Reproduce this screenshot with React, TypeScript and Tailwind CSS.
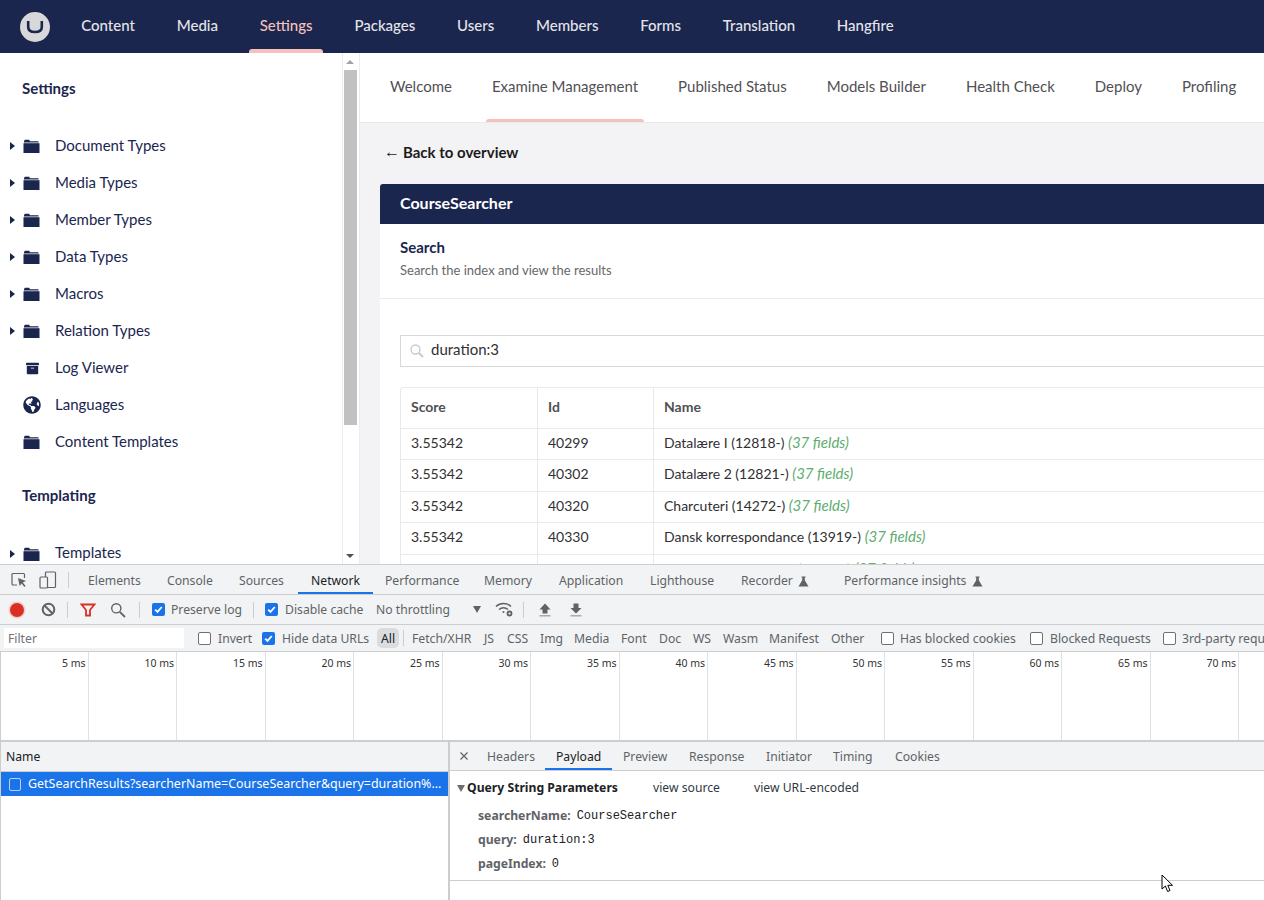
import React from 'react'
import { FaGlobeAmericas, FaArchive } from 'react-icons/fa'

const navItems = ['Content', 'Media', 'Settings', 'Packages', 'Users', 'Members', 'Forms', 'Translation', 'Hangfire']
const sectionTabs = ['Welcome', 'Examine Management', 'Published Status', 'Models Builder', 'Health Check', 'Deploy', 'Profiling']
const treeTop = [
  { label: 'Document Types', icon: 'folder', arrow: true },
  { label: 'Media Types', icon: 'folder', arrow: true },
  { label: 'Member Types', icon: 'folder', arrow: true },
  { label: 'Data Types', icon: 'folder', arrow: true },
  { label: 'Macros', icon: 'folder', arrow: true },
  { label: 'Relation Types', icon: 'folder', arrow: true },
  { label: 'Log Viewer', icon: 'box', arrow: false },
  { label: 'Languages', icon: 'globe', arrow: false },
  { label: 'Content Templates', icon: 'folder', arrow: false },
]
const rows = [
  { id: '40299', name: 'Datalære I (12818-)', h: 'h-[31px]', pb: 'pb-[3px]' },
  { id: '40302', name: 'Datalære 2 (12821-)', h: 'h-[32px]', pb: 'pb-[4px]' },
  { id: '40320', name: 'Charcuteri (14272-)', h: 'h-[31px]', pb: 'pb-[3px]' },
  { id: '40330', name: 'Dansk korrespondance (13919-)', h: 'h-[32px]', pb: 'pb-[4px]' },
  { id: '40331', name: 'Almen erhvervsrettet (13920-)', h: 'h-[31px]', pb: 'pb-[3px]' },
]
const devTabs = [
  { label: 'Elements', w: 'w-[79px]' },
  { label: 'Console', w: 'w-[72px]' },
  { label: 'Sources', w: 'w-[72px]' },
  { label: 'Network', w: 'w-[74px]', active: true },
  { label: 'Performance', w: 'w-[99px]' },
  { label: 'Memory', w: 'w-[75px]' },
  { label: 'Application', w: 'w-[91px]' },
  { label: 'Lighthouse', w: 'w-[91px]' },
]
const filters = [
  { label: 'Fetch/XHR', w: 'w-[72px]' },
  { label: 'JS', w: 'w-[23px]' },
  { label: 'CSS', w: 'w-[33px]' },
  { label: 'Img', w: 'w-[34px]' },
  { label: 'Media', w: 'w-[47px]' },
  { label: 'Font', w: 'w-[38px]' },
  { label: 'Doc', w: 'w-[34px]' },
  { label: 'WS', w: 'w-[30px]' },
  { label: 'Wasm', w: 'w-[46px]' },
  { label: 'Manifest', w: 'w-[62px]' },
  { label: 'Other', w: 'w-[50px]' },
]
const ticks = [5, 10, 15, 20, 25, 30, 35, 40, 45, 50, 55, 60, 65, 70]
const detailTabs = [
  { label: 'Headers', w: 'w-[69px]' },
  { label: 'Payload', w: 'w-[67px]', active: true },
  { label: 'Preview', w: 'w-[66px]' },
  { label: 'Response', w: 'w-[77px]' },
  { label: 'Initiator', w: 'w-[67px]' },
  { label: 'Timing', w: 'w-[62px]' },
  { label: 'Cookies', w: 'w-[70px]' },
]
const params = [
  { key: 'searcherName:', value: 'CourseSearcher' },
  { key: 'query:', value: 'duration:3' },
  { key: 'pageIndex:', value: '0' },
]

function FolderIcon() {
  return (
    <svg width="17" height="14" viewBox="0 0 17 14" fill="#1b264f">
      <path d="M1 2.2 L1.8 0.8 H6.2 L7 2.2 H15.5 V3.4 H1 Z" />
      <rect x="0.5" y="4.2" width="16" height="9.8" />
    </svg>
  )
}

function TreeIcon({ icon }: { icon: string }) {
  if (icon === 'globe') return <FaGlobeAmericas className="text-[18px] text-[#1b264f]" />
  if (icon === 'box') return <FaArchive className="ml-[3px] text-[13px] text-[#1b264f]" />
  return <FolderIcon />
}

function TreeRow({ label, icon, arrow }: { label: string; icon: string; arrow: boolean }) {
  return (
    <div className="flex h-[37px] items-center text-[15px] text-[#1b264f]">
      <div className="flex w-[23px] shrink-0 pl-[10px]">
        {arrow && <div className="h-0 w-0 border-y-[4px] border-l-[5px] border-y-transparent border-l-[#1b264f]" />}
      </div>
      <div className="flex w-[32px] shrink-0 items-center">
        <TreeIcon icon={icon} />
      </div>
      <span className="pb-[2px]">{label}</span>
    </div>
  )
}

function Check({ checked }: { checked?: boolean }) {
  return checked ? (
    <div className="flex h-[13px] w-[13px] shrink-0 items-center justify-center rounded-[2px] bg-[#1a73e8]">
      <svg width="11" height="11" viewBox="0 0 11 11" fill="none" stroke="#fff" strokeWidth="1.8">
        <path d="M2.2 5.6 L4.5 7.9 L8.8 3" />
      </svg>
    </div>
  ) : (
    <div className="h-[13px] w-[13px] shrink-0 rounded-[2px] border border-[#6f7175] bg-white" />
  )
}

function Flask() {
  return (
    <svg className="shrink-0" width="11" height="11" viewBox="0 0 11 11" fill="#5f6368">
      <path d="M3.5 0.5 H7.5 V1.5 H6.8 V4.2 L10.5 10.5 H0.5 L4.2 4.2 V1.5 H3.5 Z" />
    </svg>
  )
}

function Sep() {
  return <div className="h-[16px] w-px shrink-0 bg-[#c9ccd1]" />
}

function Sidebar() {
  return (
    <div className="flex w-[360px] shrink-0 overflow-hidden bg-white">
      <div className="w-[342px] shrink-0">
        <div className="pt-[24px] pl-[22px] text-[15px] font-bold text-[#1b264f]">Settings</div>
        <div className="pt-[28px]">
          {treeTop.map((item) => (
            <TreeRow key={item.label} {...item} />
          ))}
        </div>
        <div className="pt-[23px] pl-[22px] text-[15px] font-bold text-[#1b264f]">Templating</div>
        <div className="pt-[29px]">
          <TreeRow label="Templates" icon="folder" arrow />
        </div>
      </div>
      <div className="flex w-[18px] shrink-0 flex-col border-x border-[#ececec] bg-white">
        <div className="flex h-[17px] items-center justify-center pr-[2px]">
          <div className="h-0 w-0 border-x-[4px] border-b-[4px] border-x-transparent border-b-[#a3a3a3]" />
        </div>
        <div className="mr-[2px] ml-[1px] h-[355px] bg-[#c1c1c1]" />
        <div className="flex-1" />
        <div className="flex h-[17px] items-center justify-center pr-[2px]">
          <div className="h-0 w-0 border-x-[4px] border-t-[4px] border-x-transparent border-t-[#505050]" />
        </div>
      </div>
    </div>
  )
}

function Content() {
  return (
    <div className="min-w-0 flex-1 overflow-hidden bg-[#f3f3f5]">
      <div className="flex h-[70px] border-b border-[#e9e9eb] bg-white px-[10px] pt-0 text-[15px] text-[#515054]">
        {sectionTabs.map((tab) => (
          <div
            key={tab}
            className="relative flex h-full items-center whitespace-nowrap px-[20px] pb-[2px]"
          >
            {tab}
            {tab === 'Examine Management' && (
              <div className="absolute bottom-0 left-[14px] right-[14px] h-[3px] rounded-t-[3px] bg-[#f5c1bc]" />
            )}
          </div>
        ))}
      </div>
      <div className="pl-[20px]">
        <div className="flex h-[61px] items-center pb-[3px] pl-[4px] text-[15px] text-[#1b1b1b]">
          <span className="mr-[3px] font-['Liberation_Sans',sans-serif] text-[16px] font-normal">←</span>
          <span className="font-bold">Back to overview</span>
        </div>
        <div className="w-[1000px] rounded-t-[3px] bg-white">
          <div className="flex h-[40px] items-center rounded-t-[3px] bg-[#1b264f] pb-[2px] pl-[20px] text-[16px] font-bold text-white">
            CourseSearcher
          </div>
          <div className="h-[75px] border-b border-[#e9e9eb] pt-[13px] pl-[20px]">
            <div className="text-[15px] leading-[20px] font-bold text-[#1b264f]">Search</div>
            <div className="pt-[3px] text-[13px] leading-[20px] text-[#68676b]">Search the index and view the results</div>
          </div>
          <div className="px-[20px] pt-[36px]">
            <div className="flex h-[32px] items-center border border-[#d8d7d9] pl-[9px] text-[15px] text-[#303033]">
              <svg width="14" height="14" viewBox="0 0 14 14" fill="none" stroke="#c9c9cc" strokeWidth="1.3">
                <circle cx="5.5" cy="5.5" r="4.5" />
                <path d="M9 9 L13 13" strokeWidth="2" />
              </svg>
              <span className="pb-[3px] pl-[7px]">duration:3</span>
            </div>
            <div className="mt-[20px] rounded-[3px] border border-[#e9e9eb] text-[14px] text-[#303033]">
              <div className="flex h-[41px] items-center border-b border-[#e9e9eb] font-bold text-[#515054]">
                <div className="flex h-full w-[137px] items-center border-r border-[#e9e9eb] pb-[3px] pl-[10px]">Score</div>
                <div className="flex h-full w-[116px] items-center border-r border-[#e9e9eb] pb-[3px] pl-[10px]">Id</div>
                <div className="pb-[3px] pl-[10px]">Name</div>
              </div>
              {rows.map((row) => (
                <div key={row.id} className={`flex items-center border-b border-[#e9e9eb] ${row.h}`}>
                  <div className={`flex h-full w-[137px] items-center border-r border-[#e9e9eb] pl-[10px] ${row.pb}`}>3.55342</div>
                  <div className={`flex h-full w-[116px] items-center border-r border-[#e9e9eb] pl-[10px] ${row.pb}`}>{row.id}</div>
                  <div className={`pl-[10px] ${row.pb}`}>
                    {row.name} <em className="text-[15px] text-[#5cad6f]">(37 fields)</em>
                  </div>
                </div>
              ))}
            </div>
          </div>
        </div>
      </div>
    </div>
  )
}

function DevTools() {
  return (
    <div className="flex h-[336px] shrink-0 flex-col overflow-hidden border-t border-[#cbcdd1] bg-white font-['Noto_Sans','Open_Sans',sans-serif] text-[12.2px] text-[#5f6368]">
      {/* main tabs */}
      <div className="flex h-[30px] shrink-0 items-center border-b border-[#cbcdd1] bg-[#f1f3f4]">
        <div className="flex w-[68px] shrink-0 items-center pl-[11px]">
          <svg width="16" height="16" viewBox="0 0 16 16" fill="none" stroke="#5f6368" strokeWidth="1.2">
            <path d="M6 13 H2 A1 1 0 0 1 1 12 V2.5 A1 1 0 0 1 2 1.5 H12.5 A1 1 0 0 1 13.5 2.5 V6" />
            <path d="M7 6 L15 9 L11.8 10.5 L14.6 14 L13.4 15 L10.6 11.4 L8.6 14 Z" fill="#5f6368" stroke="none" />
          </svg>
          <svg className="ml-[12px]" width="18" height="18" viewBox="0 0 18 18" fill="none" stroke="#5f6368" strokeWidth="1.2">
            <rect x="6.5" y="1" width="10" height="15.5" rx="1" />
            <rect x="1" y="6" width="7.5" height="11" rx="1" fill="#f1f3f4" />
          </svg>
        </div>
        <Sep />
        <div className="flex h-full shrink-0 items-center pl-[7px]">
          {devTabs.map((tab) => (
            <div
              key={tab.label}
              className={`relative flex h-full shrink-0 items-center whitespace-nowrap pt-[3px] pl-[12px] ${tab.w} ${tab.active ? 'text-[#202124]' : ''}`}
            >
              {tab.label}
              {tab.active && <div className="absolute bottom-0 left-[-1px] h-[2px] w-[75px] bg-[#1a73e8]" />}
            </div>
          ))}
          <div className="flex h-full w-[115px] shrink-0 items-center gap-[5px] whitespace-nowrap pt-[3px] pl-[12px]">
            Recorder <Flask />
          </div>
          <div className="flex h-full shrink-0 items-center gap-[6px] whitespace-nowrap pt-[3px]">
            Performance insights <Flask />
          </div>
        </div>
      </div>

      {/* toolbar */}
      <div className="flex h-[30px] shrink-0 items-center border-b border-[#cbcdd1] bg-[#f1f3f4]">
        <div className="ml-[10px] h-[14px] w-[14px] shrink-0 rounded-full bg-[#d93025] shadow-[0_0_0_1.5px_#f3cdca]" />
        <svg className="ml-[17px] shrink-0" width="15" height="15" viewBox="0 0 15 15" fill="none" stroke="#5f6368" strokeWidth="2">
          <circle cx="7.5" cy="7.5" r="5.8" />
          <path d="M3.5 3.5 L11.5 11.5" />
        </svg>
        <div className="ml-[11px]"><Sep /></div>
        <svg className="ml-[12px] shrink-0" width="16" height="14" viewBox="0 0 16 14" fill="none" stroke="#d93025" strokeWidth="1.8">
          <path d="M1.5 1.5 H14.5 L10 7 V12.5 H6 V7 Z" />
        </svg>
        <svg className="ml-[14px] shrink-0" width="16" height="16" viewBox="0 0 16 16" fill="none" stroke="#5f6368" strokeWidth="1.4">
          <circle cx="6.3" cy="6.3" r="4.6" />
          <path d="M9.8 9.8 L15 15" strokeWidth="1.8" />
        </svg>
        <div className="ml-[13px]"><Sep /></div>
        <div className="ml-[12px]"><Check checked /></div>
        <span className="ml-[6px] w-[82px] shrink-0 whitespace-nowrap pt-[1px]">Preserve log</span>
        <Sep />
        <div className="ml-[11px]"><Check checked /></div>
        <span className="ml-[7px] w-[91px] shrink-0 whitespace-nowrap pt-[1px]">Disable cache</span>
        <span className="w-[97px] shrink-0 whitespace-nowrap pt-[1px]">No throttling</span>
        <div className="h-0 w-0 shrink-0 border-x-[4.5px] border-t-[7px] border-x-transparent border-t-[#5f6368]" />
        <svg className="ml-[14px] shrink-0" width="19" height="15" viewBox="0 0 19 15" fill="none" stroke="#5f6368" strokeWidth="1.5">
          <path d="M1 4.5 C5 0.5 12 0.5 16 4.5" />
          <path d="M4 7.5 C6.5 5 10.5 5 13 7.5" />
          <circle cx="8.5" cy="10" r="1" fill="#5f6368" stroke="none" />
          <circle cx="14.5" cy="11.5" r="2" strokeWidth="1.8" />
        </svg>
        <div className="ml-[9px]"><Sep /></div>
        <svg className="ml-[15px] shrink-0" width="12" height="14" viewBox="0 0 12 14" fill="#5f6368">
          <path d="M6 0.5 L11.5 6.5 H8.5 V10.5 H3.5 V6.5 H0.5 Z" />
          <rect x="0.5" y="12" width="11" height="1.5" fill="#a8abaf" />
        </svg>
        <svg className="ml-[19px] shrink-0" width="12" height="14" viewBox="0 0 12 14" fill="#5f6368">
          <path d="M3.5 0.5 H8.5 V5 H11.5 L6 10.5 L0.5 5 H3.5 Z" />
          <rect x="0.5" y="12" width="11" height="1.5" fill="#a8abaf" />
        </svg>
      </div>

      {/* filter bar */}
      <div className="flex h-[27px] shrink-0 items-center border-b border-[#cbcdd1] bg-[#f1f3f4]">
        <div className="ml-[4px] flex h-[20px] w-[180px] shrink-0 items-center bg-white pt-[2px] pl-[4px] text-[#6f7175]">Filter</div>
        <div className="ml-[14px]"><Check /></div>
        <span className="ml-[7px] w-[44px] shrink-0 whitespace-nowrap pt-[2px]">Invert</span>
        <Check checked />
        <span className="ml-[7px] w-[95px] shrink-0 whitespace-nowrap pt-[2px]">Hide data URLs</span>
        <div className="flex h-[20px] w-[22px] shrink-0 items-center justify-center rounded-[5px] bg-[#dadce0] pt-[2px] text-[#202124]">All</div>
        <div className="ml-[4px]"><Sep /></div>
        <div className="flex shrink-0 pt-[2px] pl-[8px]">
          {filters.map((f) => (
            <span key={f.label} className={`shrink-0 whitespace-nowrap ${f.w}`}>
              {f.label}
            </span>
          ))}
        </div>
        <Check />
        <span className="ml-[6px] w-[130px] shrink-0 whitespace-nowrap pt-[2px]">Has blocked cookies</span>
        <Check />
        <span className="ml-[7px] w-[113px] shrink-0 whitespace-nowrap pt-[2px]">Blocked Requests</span>
        <Check />
        <span className="ml-[6px] shrink-0 whitespace-nowrap pt-[2px]">3rd-party requests</span>
      </div>

      {/* timeline */}
      <div className="flex h-[90px] shrink-0 border-b-2 border-l border-[#cbcdd1] bg-white text-[10.5px] text-[#333]">
        {ticks.map((t) => (
          <div key={t} className="h-full w-[88.5px] shrink-0 border-r border-[#e0e1e3] pt-[3px] pr-[2px] text-right leading-[16px] whitespace-nowrap first:w-[87.6px]">
            {t} ms
          </div>
        ))}
      </div>

      {/* requests */}
      <div className="flex min-h-0 flex-1">
        <div className="w-[450px] shrink-0 border-r-2 border-l border-[#cbcdd1]">
          <div className="flex h-[30px] items-center border-b border-[#cbcdd1] bg-[#f1f3f4] pt-[1px] pl-[5px] text-[#202124]">Name</div>
          <div className="flex h-[24px] items-center overflow-hidden whitespace-nowrap bg-[#1a73e8] pl-[8px] text-[12.45px] text-white">
            <div className="h-[13px] w-[12px] shrink-0 rounded-[2px] border-[1.5px] border-[#b9d3f6]" />
            <span className="pl-[7px]">GetSearchResults?searcherName=CourseSearcher&amp;query=duration%...</span>
          </div>
        </div>
        <div className="min-w-0 flex-1">
          <div className="flex h-[29px] items-center border-b border-[#cbcdd1] bg-[#f1f3f4]">
            <svg className="ml-[9px] shrink-0" width="10" height="10" viewBox="0 0 10 10" stroke="#5f6368" strokeWidth="1.2">
              <path d="M1.5 1.5 L8.5 8.5 M8.5 1.5 L1.5 8.5" />
            </svg>
            <div className="flex h-full pl-[7px]">
              {detailTabs.map((tab) => (
                <div
                  key={tab.label}
                  className={`relative flex h-full shrink-0 items-center whitespace-nowrap pt-[2px] pl-[11px] ${tab.w} ${tab.active ? 'text-[#202124]' : ''}`}
                >
                  {tab.label}
                  {tab.active && <div className="absolute bottom-0 left-0 h-[2px] w-full bg-[#1a73e8]" />}
                </div>
              ))}
            </div>
          </div>
          <div className="h-[110px] border-b border-[#cbcdd1]">
            <div className="flex h-[33px] items-center pt-[1px] text-[#303942]">
              <div className="ml-[7px] h-0 w-0 shrink-0 border-x-[4.5px] border-t-[7px] border-x-transparent border-t-[#6e6e6e]" />
              <span className="ml-[2px] w-[186px] shrink-0 whitespace-nowrap font-bold text-[#202124]">Query String Parameters</span>
              <span className="w-[101px] shrink-0 whitespace-nowrap">view source</span>
              <span className="whitespace-nowrap">view URL-encoded</span>
            </div>
            <div className="pl-[28px]">
              {params.map((p) => (
                <div key={p.key} className="flex h-[24px] items-center whitespace-nowrap">
                  <span className="font-bold text-[#5f6368]">{p.key}</span>
                  <span className="pl-[6px] font-['Liberation_Mono',monospace] text-[12px] text-[#202124]">{p.value}</span>
                </div>
              ))}
            </div>
          </div>
        </div>
      </div>
    </div>
  )
}

export default function App() {
  return (
    <div className="relative flex h-[900px] w-[1264px] flex-col overflow-hidden bg-white font-['Lato',sans-serif]">
      <div className="flex h-[53px] shrink-0 items-center bg-[#1b264f]">
        <div className="ml-[20px] flex h-[30px] w-[30px] shrink-0 items-center justify-center rounded-full bg-[#d8d7d9]">
          <svg width="18" height="14" viewBox="0 0 18 14" fill="none" stroke="#1b264f" strokeWidth="2.6">
            <path d="M2.2 1 V7 C2.2 10.8 5 12 9 12 C13 12 15.8 10.8 15.8 7 V1" />
          </svg>
        </div>
        <div className="ml-[10.3px] flex h-full text-[15px] font-medium text-[#e4e4e8]">
          {navItems.map((item) => (
            <div
              key={item}
              className={`relative flex h-full items-center whitespace-nowrap px-[20.9px] pb-[3px] ${item === 'Settings' ? 'text-[#f5c1bc]' : ''}`}
            >
              {item}
              {item === 'Settings' && (
                <div className="absolute right-[10px] bottom-0 left-[10px] h-[4px] rounded-t-[3px] bg-[#f5c1bc]" />
              )}
            </div>
          ))}
        </div>
      </div>
      <div className="flex min-h-0 flex-1">
        <Sidebar />
        <Content />
      </div>
      <DevTools />
      <svg className="absolute top-[874px] left-[1161px]" width="13" height="20" viewBox="0 0 13 20" fill="#fff" stroke="#000" strokeWidth="1">
        <path d="M1 1 V15 L4.4 12 L6.6 17.5 L9 16.5 L6.8 11.3 H11.5 Z" />
      </svg>
    </div>
  )
}
